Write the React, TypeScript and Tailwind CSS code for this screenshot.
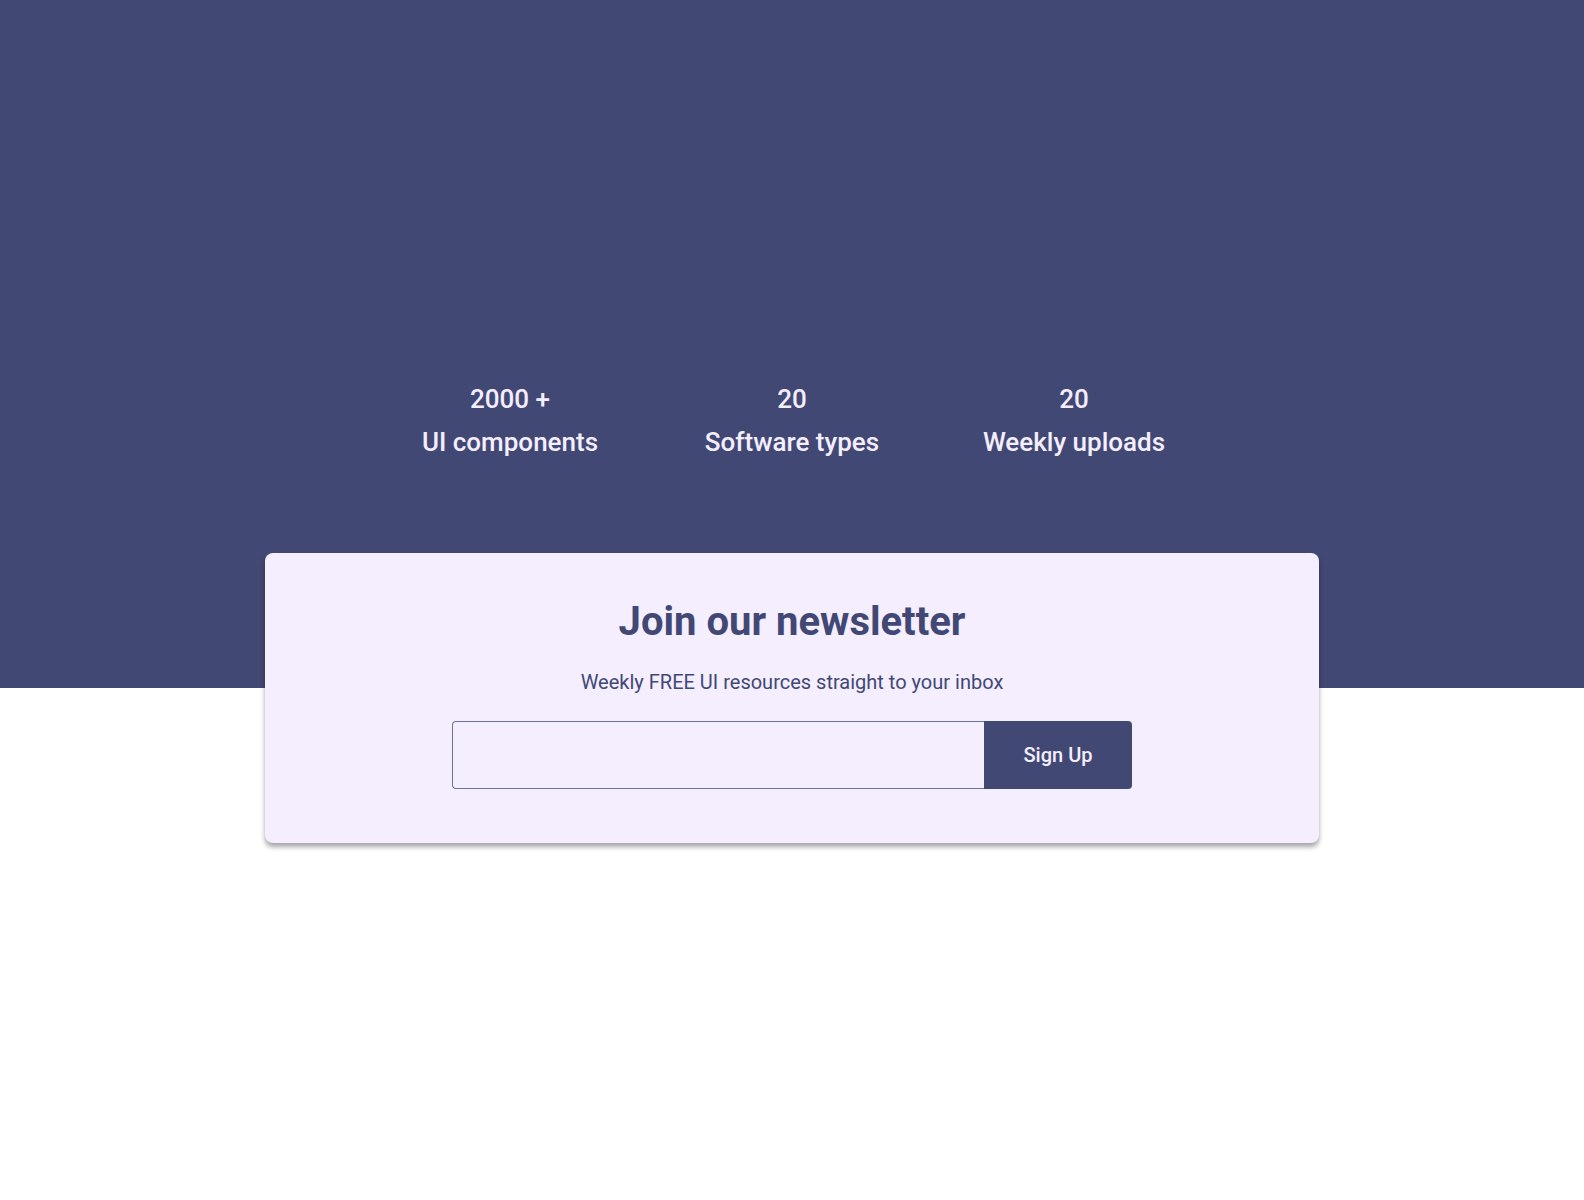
import { useState } from 'react'

const stats = [
  { value: '2000 +', label: 'UI components' },
  { value: '20', label: 'Software types' },
  { value: '20', label: 'Weekly uploads' },
]

export default function App() {
  const [email, setEmail] = useState('')

  return (
    <div className="min-h-[1200px] bg-white font-['Roboto',sans-serif]">
      {/* Stats band */}
      <section className="h-[688px] bg-[#424874] pt-[381px]">
        <div className="mx-auto grid w-[846px] grid-cols-3">
          {stats.map(s => (
            <div key={s.label} className="flex flex-col items-center font-medium text-[#f4eeff]">
              <span className="text-[26px] leading-[36px]">{s.value}</span>
              <span className="mt-[7px] text-[26px] leading-[36px]">{s.label}</span>
            </div>
          ))}
        </div>
      </section>

      {/* Newsletter card */}
      <div className="-mt-[135px] flex justify-center">
        <div className="flex w-[1054px] flex-col items-center rounded-lg bg-[#f4eeff] pt-[45px] pb-[54px] shadow-[0_4px_5px_rgba(0,0,0,0.35)]">
          <h2 className="text-[40px] font-bold leading-[48px] text-[#424874]">Join our newsletter</h2>
          <p className="mt-[22px] text-[20px] leading-[28px] text-[#424874]">Weekly FREE UI resources straight to your inbox</p>
          <form className="mt-[25px] flex h-[68px] w-[680px]" onSubmit={e => e.preventDefault()}>
            <input
              type="email"
              value={email}
              onChange={e => setEmail(e.target.value)}
              className="h-full flex-1 rounded-l border border-r-0 border-[#6f739c] bg-[#f4eeff] px-4 text-[18px] text-[#424874] outline-none"
            />
            <button type="submit" className="h-full w-[148px] rounded-r bg-[#424874] text-[20px] font-medium text-[#f4eeff]">
              Sign Up
            </button>
          </form>
        </div>
      </div>
    </div>
  )
}
